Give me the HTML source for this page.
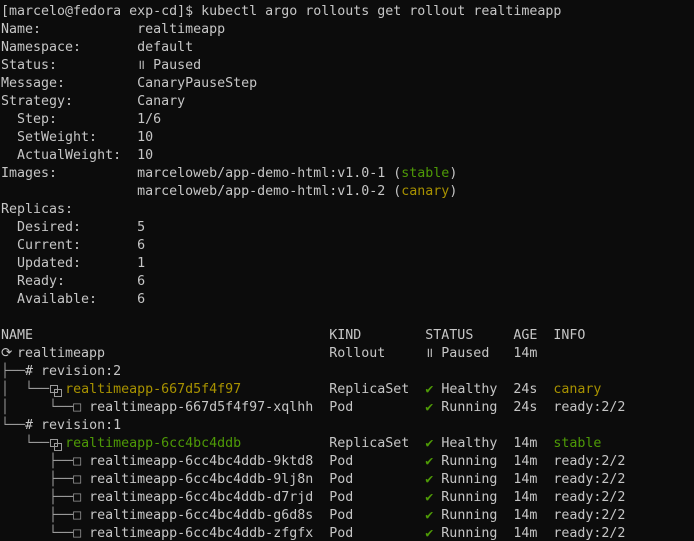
<!DOCTYPE html>
<html><head><meta charset="utf-8"><style>
html,body{margin:0;padding:0;background:#0c0c0c;width:694px;height:541px;overflow:hidden}
pre{margin:0;padding:3px 0 0 1px;font-family:"DejaVu Sans Mono","Liberation Mono",monospace;font-size:13.3px;line-height:18px;color:#c6c6c6;white-space:pre}
.y{color:#a89200}.g{color:#4e9a06}.t{color:#9a9a9a}
i{font-style:normal;display:inline-block;width:8.01px;text-align:left;vertical-align:top;height:18px}
i svg{position:relative;left:1px;top:4px;overflow:visible}
</style></head><body><pre>[marcelo@fedora exp-cd]$ kubectl argo rollouts get rollout realtimeapp
Name:            realtimeapp
Namespace:       default
Status:          <i>॥</i> Paused
Message:         CanaryPauseStep
Strategy:        Canary
  Step:          1/6
  SetWeight:     10
  ActualWeight:  10
Images:          marceloweb/app-demo-html:v1.0-1 (<span class="g">stable</span>)
                 marceloweb/app-demo-html:v1.0-2 (<span class="y">canary</span>)
Replicas:
  Desired:       5
  Current:       6
  Updated:       1
  Ready:         6
  Available:     6

NAME                                     KIND        STATUS     AGE  INFO
<i>⟳</i> realtimeapp                            Rollout     <i>॥</i> Paused   14m
<span class="t">├──</span># revision:2
<span class="t">│  └──<i><svg width="12" height="12"><rect x="0.5" y="0.5" width="7" height="7" fill="none" stroke="#9a9a9a"/><rect x="4.5" y="4.5" width="7" height="7" fill="none" stroke="#9a9a9a"/></svg></i></span> <span class="y">realtimeapp-667d5f4f97</span>           ReplicaSet  <span class="g"><i>✔</i></span> Healthy  24s  <span class="y">canary</span>
<span class="t">│     └──<i>□</i></span> realtimeapp-667d5f4f97-xqlhh  Pod         <span class="g"><i>✔</i></span> Running  24s  ready:2/2
<span class="t">└──</span># revision:1
<span class="t">   └──<i><svg width="12" height="12"><rect x="0.5" y="0.5" width="7" height="7" fill="none" stroke="#9a9a9a"/><rect x="4.5" y="4.5" width="7" height="7" fill="none" stroke="#9a9a9a"/></svg></i></span> <span class="g">realtimeapp-6cc4bc4ddb</span>           ReplicaSet  <span class="g"><i>✔</i></span> Healthy  14m  <span class="g">stable</span>
<span class="t">      ├──<i>□</i></span> realtimeapp-6cc4bc4ddb-9ktd8  Pod         <span class="g"><i>✔</i></span> Running  14m  ready:2/2
<span class="t">      ├──<i>□</i></span> realtimeapp-6cc4bc4ddb-9lj8n  Pod         <span class="g"><i>✔</i></span> Running  14m  ready:2/2
<span class="t">      ├──<i>□</i></span> realtimeapp-6cc4bc4ddb-d7rjd  Pod         <span class="g"><i>✔</i></span> Running  14m  ready:2/2
<span class="t">      ├──<i>□</i></span> realtimeapp-6cc4bc4ddb-g6d8s  Pod         <span class="g"><i>✔</i></span> Running  14m  ready:2/2
<span class="t">      └──<i>□</i></span> realtimeapp-6cc4bc4ddb-zfgfx  Pod         <span class="g"><i>✔</i></span> Running  14m  ready:2/2
</pre></body></html>
